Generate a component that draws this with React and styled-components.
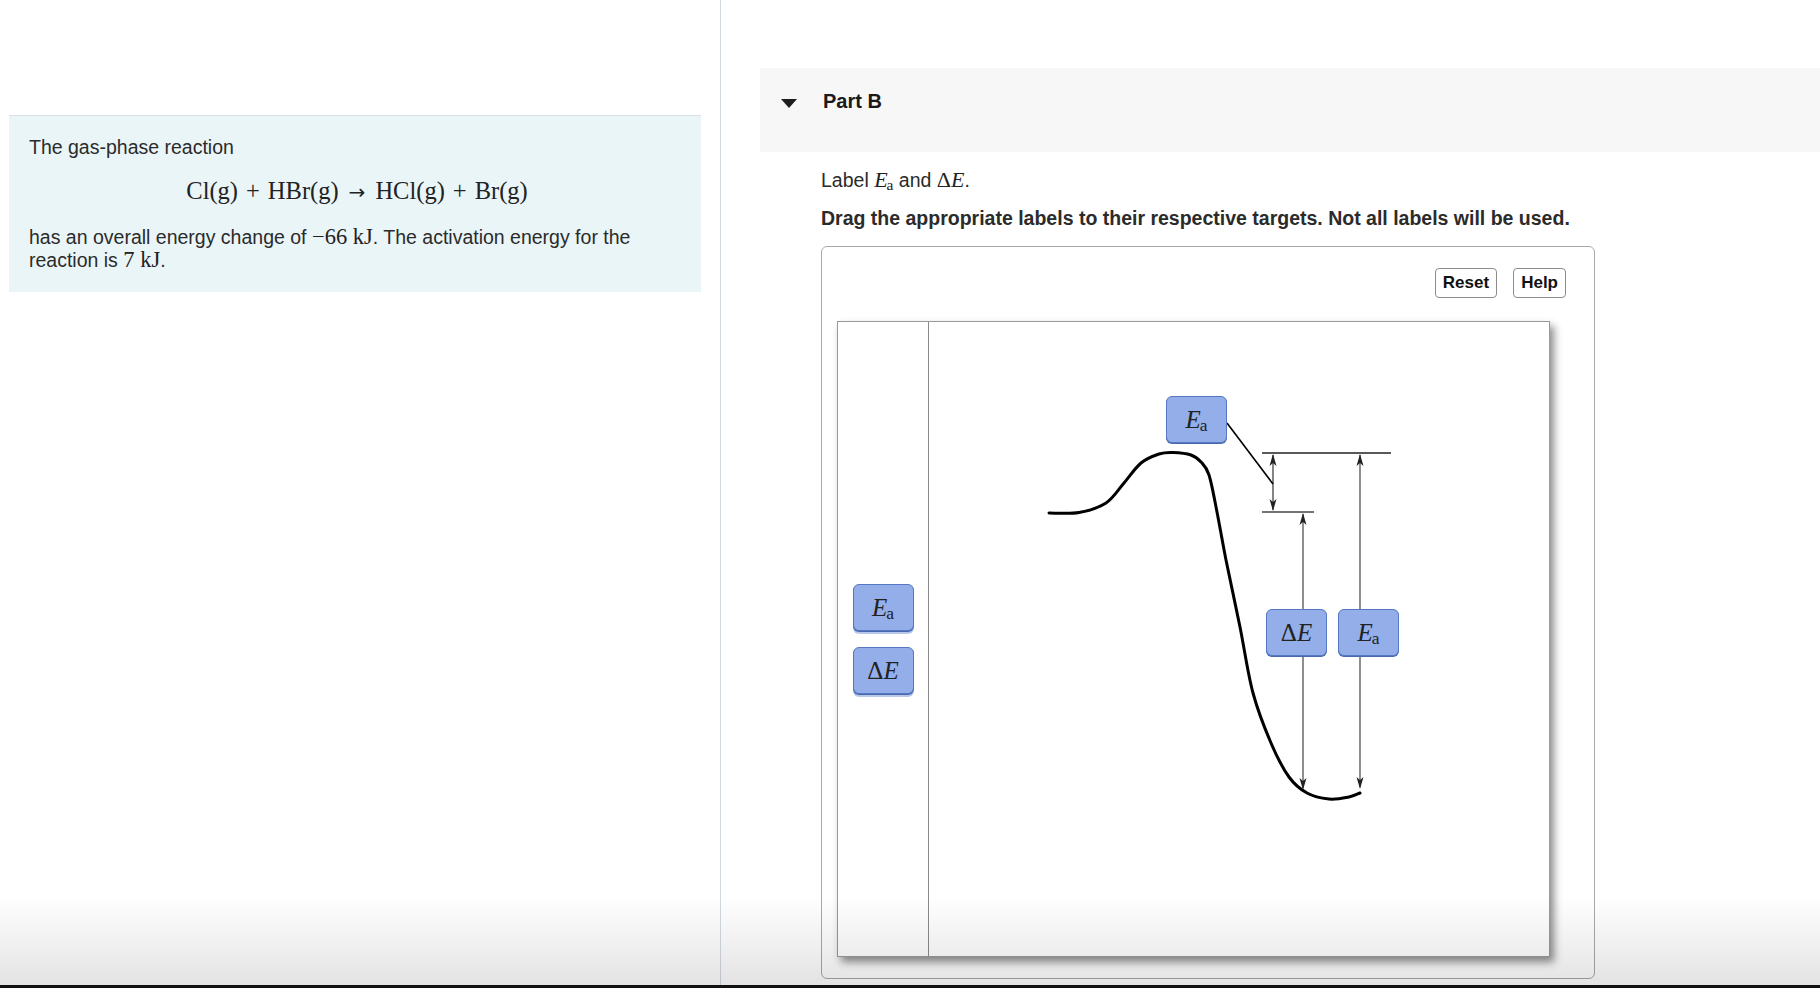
import React from 'react';
import styled, { createGlobalStyle } from 'styled-components';

const GlobalStyle = createGlobalStyle`
  html, body {
    margin: 0;
    padding: 0;
    background: #fff;
    overflow: hidden;
  }
  body {
    font-family: "Liberation Sans", Arial, sans-serif;
    color: #333;
  }
`;

const Page = styled.div`
  display: grid;
  grid-template-columns: 721px 1fr;
  height: 988px;
`;

const LeftCol = styled.div`
  border-right: 1px solid #d3dae0;
  padding: 115px 19px 0 9px;
`;

const Intro = styled.div`
  background: #eaf5f8;
  border-top: 1px solid #d9e1e4;
  padding: 20px 16px 20px 20px;
  font-size: 19.5px;
  line-height: 23px;
  color: #2b2b2b;
`;

const Para = styled.p`
  margin: 0;
`;

const Equation = styled.div`
  margin: 17px 0 19px;
  text-align: center;
  font-family: "Liberation Serif", "Times New Roman", serif;
  font-size: 24.5px;
  line-height: 30px;
  color: #222;
`;

const Op = styled.span`
  margin: 0 8px;
`;

const Arrow = styled.span`
  font-family: "DejaVu Sans", sans-serif;
  font-size: 20px;
  margin: 0 10px;
`;

const M = styled.span`
  font-family: "Liberation Serif", "Times New Roman", serif;
  font-size: ${(p) => p.$size || '22.5px'};
  line-height: 1;
  color: #222;
`;

const MathSpan = styled.span`
  white-space: nowrap;
`;

const Mi = styled.i`
  font-family: "Liberation Serif", "Times New Roman", serif;
  font-style: italic;
`;

const Sub = styled.span`
  font-family: "Liberation Serif", "Times New Roman", serif;
  font-style: normal;
  font-size: 0.7em;
  position: relative;
  top: 0.22em;
  margin-left: -1px;
`;

const RightCol = styled.div`
  padding: 68px 0 0 39px;
`;

const PartHeader = styled.div`
  display: flex;
  gap: 26px;
  height: 84px;
  box-sizing: border-box;
  padding: 21px 0 0 21px;
  align-items: flex-start;
  background: #f7f7f7;
`;

const Caret = styled.span`
  margin-top: 10px;
  width: 0;
  height: 0;
  border-left: 8px solid transparent;
  border-right: 8px solid transparent;
  border-top: 9px solid #1e1e1e;
`;

const PartTitle = styled.h2`
  margin: 0;
  font-size: 20px;
  line-height: 24px;
  font-weight: 700;
  color: #1a1a1a;
`;

const Body = styled.div`
  padding-left: 61px;
`;

const Prompt = styled.p`
  margin: 15px 0 0;
  font-size: 19.5px;
  line-height: 26px;
  color: #2b2b2b;
`;

const Instruction = styled.p`
  margin: 12px 0 0;
  font-size: 19.5px;
  line-height: 26px;
  font-weight: 700;
  color: #2b2b2b;
`;

const Widget = styled.div`
  margin-top: 15px;
  width: 774px;
  height: 733px;
  box-sizing: border-box;
  border: 1px solid #a9a9a9;
  border-radius: 6px;
  padding: 0 28px 21px 15px;
  display: flex;
  flex-direction: column;
`;

const Toolbar = styled.div`
  display: flex;
  justify-content: flex-end;
  gap: 16px;
  padding-top: 21px;
`;

const ToolButton = styled.button`
  height: 30px;
  padding: 0 7px;
  background: #fff;
  border: 1px solid #8c8c8c;
  border-radius: 4px;
  font-family: "Liberation Sans", Arial, sans-serif;
  font-size: 17px;
  font-weight: 700;
  color: #111;
  cursor: pointer;
`;

const Board = styled.div`
  margin-top: 23px;
  display: flex;
  height: 636px;
  width: 713px;
  box-sizing: border-box;
  border: 1px solid #9a9a9a;
  background: #fff;
  box-shadow: 4px 5px 8px rgba(0, 0, 0, 0.45);
`;

const Palette = styled.div`
  width: 90px;
  border-right: 1px solid #8a8a8a;
  display: flex;
  flex-direction: column;
  align-items: center;
  justify-content: center;
  gap: 16px;
`;

const Canvas = styled.div`
  position: relative;
  flex: 1;
`;

const Tag = styled.div`
  width: 61px;
  height: 47px;
  box-sizing: border-box;
  display: flex;
  align-items: center;
  justify-content: center;
  background: #93aee9;
  border: 1px solid #5677c2;
  border-radius: 6px;
  box-shadow: ${(p) =>
    p.$stacked ? '0 1px 0 #4a68ad, 0 3px 0 #b9c8ea' : '0 1px 0 #4a68ad'};
  font-family: "Liberation Serif", "Times New Roman", serif;
  font-size: 25px;
  color: #222;
  cursor: grab;
`;

const PlacedTag = styled(Tag)`
  position: absolute;
  left: ${(p) => p.$x}px;
  top: ${(p) => p.$y}px;
`;

const Fade = styled.div`
  position: fixed;
  left: 0;
  right: 0;
  bottom: 0;
  height: 108px;
  pointer-events: none;
  background: linear-gradient(to bottom, rgba(0, 0, 0, 0) 15%, rgba(0, 0, 0, 0.11) 97%, #111 97%);
`;

const Ea = () => (
  <MathSpan>
    <Mi>E</Mi>
    <Sub>a</Sub>
  </MathSpan>
);

const DeltaE = () => (
  <MathSpan>
    Δ<Mi>E</Mi>
  </MathSpan>
);

// catmull-rom through the sampled points of the energy curve
function smoothPath(pts) {
  let d = `M${pts[0][0]} ${pts[0][1]}`;
  for (let i = 0; i < pts.length - 1; i++) {
    const p0 = pts[i - 1] || pts[i];
    const p1 = pts[i];
    const p2 = pts[i + 1];
    const p3 = pts[i + 2] || p2;
    const c1 = [p1[0] + (p2[0] - p0[0]) / 6, p1[1] + (p2[1] - p0[1]) / 6];
    const c2 = [p2[0] - (p3[0] - p1[0]) / 6, p2[1] - (p3[1] - p1[1]) / 6];
    d += ` C${c1[0].toFixed(1)} ${c1[1].toFixed(1)} ${c2[0].toFixed(1)} ${c2[1].toFixed(1)} ${p2[0]} ${p2[1]}`;
  }
  return d;
}

const curve = [
  [120, 191], [150, 190.5], [177, 181], [195, 161], [212, 141], [230, 132],
  [244, 130.5], [262, 133], [272, 140], [280, 153], [288, 190], [297, 238],
  [311, 305], [324, 371], [342, 421], [360, 455], [378, 471], [400, 477],
  [420, 475], [431, 471],
];

const Head = ({ x, y, up }) => {
  const s = up ? 1 : -1;
  return (
    <polygon
      points={`${x},${y} ${x - 3.5},${y + 12 * s} ${x},${y + 9 * s} ${x + 3.5},${y + 12 * s}`}
      fill="#222"
    />
  );
};

function EnergyDiagram() {
  return (
    <svg width="620" height="634" viewBox="0 0 620 634">
      <path d={smoothPath(curve)} fill="none" stroke="#000" strokeWidth="3" strokeLinecap="round" />
      <line x1="333" y1="131" x2="462" y2="131" stroke="#222" strokeWidth="1.6" />
      <line x1="333" y1="190" x2="385" y2="190" stroke="#444" strokeWidth="1.4" />
      <line x1="344" y1="133" x2="344" y2="188" stroke="#333" strokeWidth="1.2" />
      <Head x={344} y={132} up />
      <Head x={344} y={189} />
      <line x1="374" y1="192" x2="374" y2="466" stroke="#444" strokeWidth="1.2" />
      <Head x={374} y={191} up />
      <Head x={374} y={468} />
      <line x1="431" y1="133" x2="431" y2="465" stroke="#444" strokeWidth="1.2" />
      <Head x={431} y={132} up />
      <Head x={431} y={467} />
      <line x1="298" y1="101" x2="344" y2="162" stroke="#000" strokeWidth="1.6" />
    </svg>
  );
}

export default function App() {
  return (
    <>
      <GlobalStyle />
      <Page>
        <LeftCol>
          <Intro>
            <Para>The gas-phase reaction</Para>
            <Equation>
              Cl(g)<Op>+</Op>HBr(g)<Arrow>→</Arrow>HCl(g)<Op>+</Op>Br(g)
            </Equation>
            <Para>
              has an overall energy change of <M>−66 kJ</M>. The activation energy for the
              reaction is <M>7 kJ</M>.
            </Para>
          </Intro>
        </LeftCol>
        <RightCol>
          <PartHeader>
            <Caret />
            <PartTitle>Part B</PartTitle>
          </PartHeader>
          <Body>
            <Prompt>
              Label <M $size="22px"><Ea /></M> and <M $size="22px"><DeltaE /></M>.
            </Prompt>
            <Instruction>
              Drag the appropriate labels to their respective targets. Not all labels will be used.
            </Instruction>
            <Widget>
              <Toolbar>
                <ToolButton>Reset</ToolButton>
                <ToolButton>Help</ToolButton>
              </Toolbar>
              <Board>
                <Palette>
                  <Tag $stacked><Ea /></Tag>
                  <Tag $stacked><DeltaE /></Tag>
                </Palette>
                <Canvas>
                  <EnergyDiagram />
                  <PlacedTag $x={237} $y={74}><Ea /></PlacedTag>
                  <PlacedTag $x={337} $y={287}><DeltaE /></PlacedTag>
                  <PlacedTag $x={409} $y={287}><Ea /></PlacedTag>
                </Canvas>
              </Board>
            </Widget>
          </Body>
        </RightCol>
      </Page>
      <Fade />
    </>
  );
}
